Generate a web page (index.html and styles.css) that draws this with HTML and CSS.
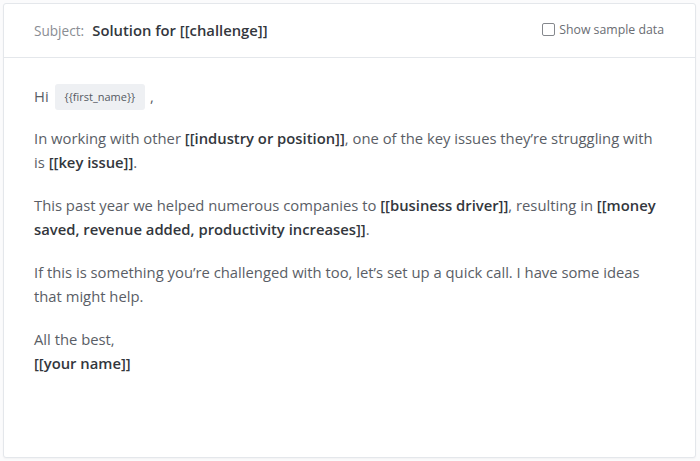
FILE: index.html
```html
<!DOCTYPE html>
<html lang="en">
<head>
    <meta charset="UTF-8">
    <meta name="viewport" content="width=device-width, initial-scale=1.0">
    <title>Email template</title>
    <link rel="stylesheet" href="styles.css">
</head>
<body>
    <div class="page">
        <div class="card">

            <div class="card-header">
                <div class="subject">
                    <span class="subject-label">Subject:</span>
                    <span class="subject-value">Solution for [[challenge]]</span>
                </div>
                <label class="sample">
                    <span class="checkbox"></span>
                    Show sample data
                </label>
            </div>

            <div class="card-body">
                <p class="greeting">Hi <span class="token">{{first_name}}</span> ,</p>

                <p>In working with other <b>[[industry or position]]</b>, one of the key issues they’re struggling with is <b>[[key issue]]</b>.</p>

                <p>This past year we helped numerous companies to <b>[[business driver]]</b>, resulting in <b>[[money saved, revenue added, productivity increases]]</b>.</p>

                <p>If this is something you’re challenged with too, let’s set up a quick call. I have some ideas that might help.</p>

                <p>All the best,<br><b>[[your name]]</b></p>
            </div>

        </div>
    </div>
</body>
</html>
```

FILE: styles.css
```css
body {
    margin: 0;
    background: #fbfbfc;
    font-family: "Open Sans", "Liberation Sans", sans-serif;
}

.page {
    padding: 3px 4px 3px 3px;
}

.card {
    height: 453px;
    background: #fff;
    border: 1px solid #e4e7eb;
    border-radius: 3px;
    box-shadow: 0 1px 2px rgba(0, 0, 0, 0.04);
}

.card-header {
    height: 53px;
    display: flex;
    align-items: center;
    justify-content: space-between;
    padding: 0 30px;
    border-bottom: 1px solid #e4e7eb;
}

.subject {
    margin-top: -2px;
}

.subject-label {
    font-size: 13.6px;
    color: #8a8d93;
    margin-right: 4px;
}

.subject-value {
    font-size: 14.8px;
    font-weight: 600;
    color: #33373d;
}

.sample {
    display: flex;
    align-items: center;
    font-size: 12.3px;
    color: #6a6d73;
    margin-right: 1px;
    margin-top: -2px;
}

.checkbox {
    width: 11px;
    height: 11px;
    border: 1px solid #85888d;
    border-radius: 2px;
    margin-right: 4px;
}

.card-body {
    padding: 26px 34px 26px 30px;
    font-size: 14.8px;
    line-height: 24px;
    color: #5a5e66;
}

.card-body p {
    margin: 0 0 19px;
}

.card-body .greeting {
    margin-bottom: 16px;
}

.card-body b {
    font-weight: 600;
    color: #33373d;
}

.token {
    background: #eef0f3;
    color: #555a62;
    font-size: 11px;
    padding: 5px 10px 6px;
    border-radius: 3px;
    margin: 0 1px 0 2px;
    position: relative;
    top: -1px;
}
```
